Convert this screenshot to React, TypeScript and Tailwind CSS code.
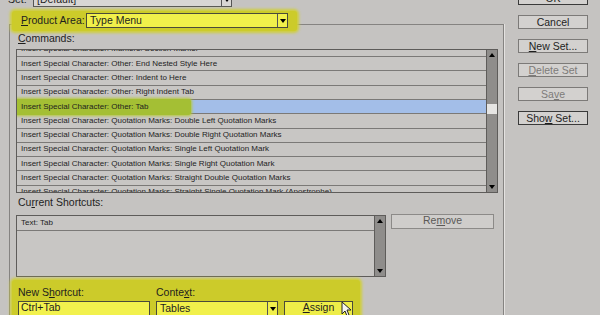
import type React from 'react'

const ui = { fontFamily: '"Liberation Sans", Arial, sans-serif' }

const commands = [
  'Insert Special Character: Markers: Section Marker',
  'Insert Special Character: Other: End Nested Style Here',
  'Insert Special Character: Other: Indent to Here',
  'Insert Special Character: Other: Right Indent Tab',
  'Insert Special Character: Other: Tab',
  'Insert Special Character: Quotation Marks: Double Left Quotation Marks',
  'Insert Special Character: Quotation Marks: Double Right Quotation Marks',
  'Insert Special Character: Quotation Marks: Single Left Quotation Mark',
  'Insert Special Character: Quotation Marks: Single Right Quotation Mark',
  'Insert Special Character: Quotation Marks: Straight Double Quotation Marks',
  'Insert Special Character: Quotation Marks: Straight Single Quotation Mark (Apostrophe)',
]

const Btn: React.FC<{ label: React.ReactNode; disabled?: boolean; strong?: boolean }> = ({ label, disabled, strong }) => (
  <div
    className={`flex h-[14px] w-[70px] items-center justify-center border bg-[#d3d1cf] text-[10.5px] leading-none whitespace-nowrap ${
      strong ? 'border-[#3a3a3a]' : 'border-[#7c7a78]'
    } ${disabled ? 'text-[#7d7b79]' : 'text-[#1e1e1e]'}`}
  >
    {label}
  </div>
)

const Chevron: React.FC = () => (
  <div className="flex h-full w-[10px] items-center justify-center border-l border-[#555]">
    <div className="h-0 w-0 border-x-[3px] border-t-[4px] border-x-transparent border-t-black" />
  </div>
)

const ScrollBar: React.FC<{ thumb?: boolean }> = ({ thumb }) => (
  <div className="flex w-[11px] shrink-0 flex-col items-center border-l border-[#5e5c5a] bg-[#8f8d8b]">
    <div className="mt-[3px] h-0 w-0 border-x-[3px] border-b-[4px] border-x-transparent border-b-black" />
    {thumb ? <div className="mt-[47px] h-[10px] w-[10px] bg-[#e6e5e3]" /> : null}
    <div className="flex-1" />
    <div className="mb-[3px] h-0 w-0 border-x-[3px] border-t-[4px] border-x-transparent border-t-black" />
  </div>
)

export default function App() {
  return (
    <div className="flex h-[315px] w-[600px] overflow-hidden bg-[#c5c3c1] text-[#1e1e1e]" style={ui}>
      {/* left column */}
      <div className="flex w-[506px] shrink-0 flex-col">
        <div className="-mt-[8px] flex h-[16px] items-center pl-[8px] text-[10.5px]">
          <span className="w-[25px]">Set:</span>
          <div className="flex h-[15px] w-[199px] items-center border border-[#555] bg-[#d8d6d4]">
            <span className="flex-1 pl-[3px]">[Default]</span>
            <Chevron />
          </div>
        </div>

        {/* group box */}
        <div className="mt-[16px] ml-[9px] flex w-[495px] flex-1 flex-col border-x border-t border-[#858381] shadow-[1px_0_0_#e4e2e0]">
          <div className="-mt-[14px] ml-[2px] flex h-[20px] w-[285px] shrink-0 items-center rounded-[3px] bg-[#cccb2a] pl-[9px] text-[10.5px] shadow-[0_0_3px_2px_#d0cf3a]">
            <span className="w-[65px] shrink-0 whitespace-nowrap">
              <u>P</u>roduct Area:
            </span>
            <div className="flex h-[15px] w-[202px] items-center border border-[#4a4a3a] bg-[#f1f04b]">
              <span className="flex-1 pl-[3px]">Type Menu</span>
              <Chevron />
            </div>
          </div>

          <div className="flex h-[18px] shrink-0 items-end pb-[2px] pl-[8px] text-[10.5px]">
            <span>
              <u>C</u>ommands:
            </span>
          </div>

          <div className="ml-[6px] flex h-[144px] w-[482px] shrink-0 border border-[#5e5c5a] bg-[#c8c6c4]">
            <div className="flex-1 overflow-hidden">
              <div className="-mt-[7px]">
                {commands.map((c, i) => (
                  <div
                    key={c}
                    className={`relative flex h-[14.3px] items-center border-b border-[#7b7977] pl-[4px] text-[8px] whitespace-nowrap ${
                      i === 4 ? 'bg-[#a3bee8]' : ''
                    }`}
                  >
                    {i === 4 ? (
                      <div className="absolute top-[-1px] left-[-4px] h-[16px] w-[178px] rounded-[3px] bg-[#a4bf34] shadow-[0_0_3px_1px_#b5c93a]" />
                    ) : null}
                    <span className="relative">{c}</span>
                  </div>
                ))}
              </div>
            </div>
            <ScrollBar thumb />
          </div>

          <div className="flex h-[22px] shrink-0 items-end pb-[4px] pl-[8px] text-[10.5px]">
            <span>
              Cu<u>r</u>rent Shortcuts:
            </span>
          </div>

          <div className="flex shrink-0 gap-[5px] pl-[6px]">
            <div className="flex h-[62px] w-[370px] border border-[#5e5c5a] bg-[#c8c6c4]">
              <div className="flex-1">
                <div className="flex h-[15px] items-center border-b border-[#7b7977] pl-[4px] text-[8px]">Text: Tab</div>
              </div>
              <ScrollBar />
            </div>
            <div className="-mt-[1px] flex h-[15px] w-[103px] items-center justify-center border border-[#8c8a88] bg-[#cfcdcb] text-[10.5px] text-[#5b5957]">
              Re<u>m</u>ove
            </div>
          </div>

          <div className="relative mt-[3px] ml-[2px] flex h-[40px] w-[348px] shrink-0 gap-[6px] rounded-[3px] bg-[#cccb2a] pt-[6px] pl-[6px] text-[10.5px] shadow-[0_0_3px_2px_#d0cf3a]">
            <div className="flex flex-col">
              <span className="h-[13px] leading-[13px] whitespace-nowrap">
                New S<u>h</u>ortcut:
              </span>
              <div className="mt-[2px] flex h-[15px] w-[132px] items-center border border-[#4a4a3a] bg-[#f2f14d] pl-[2px]">
                Ctrl+Tab
              </div>
            </div>
            <div className="flex flex-col">
              <span className="h-[13px] leading-[13px]">
                Conte<u>x</u>t:
              </span>
              <div className="mt-[2px] flex h-[16px] w-[122px] items-center border border-[#4a4a3a] bg-[#f1f04b]">
                <span className="flex-1 pl-[3px]">Tables</span>
                <Chevron />
              </div>
            </div>
            <div className="mt-[15px] flex h-[15px] w-[69px] items-center justify-center border border-[#4a4a3a] bg-[#eeed48]">
              <u>A</u>ssign
            </div>
            {/* mouse cursor over the button */}
            <svg className="absolute top-[21px] left-[329px]" width="11" height="16" viewBox="0 0 11 16">
              <path d="M1 1 L1 13 L4 10 L6 15 L8 14 L6 9 L10 9 Z" fill="#f4f4f0" stroke="#222" strokeWidth="1" />
            </svg>
          </div>
        </div>
      </div>

      {/* right column */}
      <div className="-mt-[9px] flex flex-col gap-[10px] pl-[12px]">
        <Btn label="OK" strong />
        <Btn label="Cancel" />
        <Btn
          label={
            <span>
              <u>N</u>ew Set...
            </span>
          }
        />
        <Btn
          disabled
          label={
            <span>
              <u>D</u>elete Set
            </span>
          }
        />
        <Btn
          disabled
          label={
            <span>
              Sa<u>v</u>e
            </span>
          }
        />
        <Btn
          strong
          label={
            <span>
              Sho<u>w</u> Set...
            </span>
          }
        />
      </div>
    </div>
  )
}
